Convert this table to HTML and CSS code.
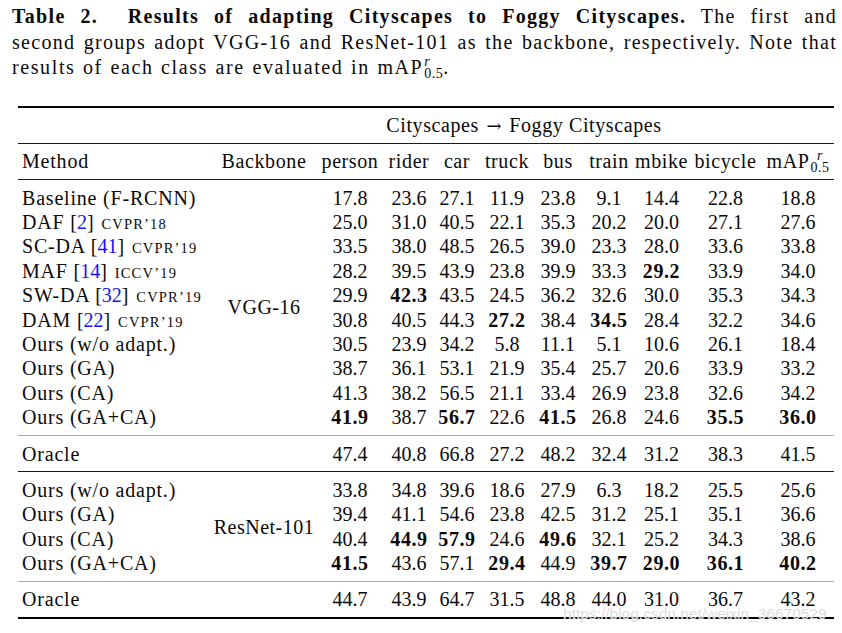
FILE: index.html
```html
<!DOCTYPE html>
<html>
<head>
<meta charset="utf-8">
<link rel="stylesheet" href="styles.css">
</head>
<body>
<div class="page">
  <div class="caption">
    <div class="cap-line just"><b>Table 2.&nbsp; Results of adapting Cityscapes to Foggy Cityscapes.</b> The first and</div>
    <div class="cap-line just">second groups adopt VGG-16 and ResNet-101 as the backbone, respectively. Note that</div>
    <div class="cap-line plain">results of each class are evaluated in mAP<span class="ss"><span class="ss-sup">r</span><span class="ss-sub">0.5</span></span>.</div>
  </div>

  <div class="results">
    <div class="rule heavy"></div>

    <div class="cell head"></div>
    <div class="cell head span-all label">Cityscapes <span class="arrow">→</span> Foggy Cityscapes</div>
    <div class="rule"></div>

    <div class="cell head method">Method</div>
    <div class="cell head label">Backbone</div>
    <div class="cell head label">person</div>
    <div class="cell head label">rider</div>
    <div class="cell head label">car</div>
    <div class="cell head label">truck</div>
    <div class="cell head label">bus</div>
    <div class="cell head label">train</div>
    <div class="cell head label">mbike</div>
    <div class="cell head label">bicycle</div>
    <div class="cell head label">mAP<span class="ss"><span class="ss-sup">r</span><span class="ss-sub">0.5</span></span></div>
    <div class="rule"></div>

    <div class="pad"></div>
    <div class="cell method">Baseline (F-RCNN)</div><div class="cell bb span10">VGG-16</div><div class="cell">17.8</div><div class="cell">23.6</div><div class="cell">27.1</div><div class="cell">11.9</div><div class="cell">23.8</div><div class="cell">9.1</div><div class="cell">14.4</div><div class="cell">22.8</div><div class="cell">18.8</div>
    <div class="cell method">DAF <span class="cite">[<span class="ref">2</span>]</span> <span class="venue">CVPR’18</span></div><div class="cell">25.0</div><div class="cell">31.0</div><div class="cell">40.5</div><div class="cell">22.1</div><div class="cell">35.3</div><div class="cell">20.2</div><div class="cell">20.0</div><div class="cell">27.1</div><div class="cell">27.6</div>
    <div class="cell method">SC-DA <span class="cite">[<span class="ref">41</span>]</span> <span class="venue">CVPR’19</span></div><div class="cell">33.5</div><div class="cell">38.0</div><div class="cell">48.5</div><div class="cell">26.5</div><div class="cell">39.0</div><div class="cell">23.3</div><div class="cell">28.0</div><div class="cell">33.6</div><div class="cell">33.8</div>
    <div class="cell method">MAF <span class="cite">[<span class="ref">14</span>]</span> <span class="venue">ICCV’19</span></div><div class="cell">28.2</div><div class="cell">39.5</div><div class="cell">43.9</div><div class="cell">23.8</div><div class="cell">39.9</div><div class="cell">33.3</div><div class="cell best">29.2</div><div class="cell">33.9</div><div class="cell">34.0</div>
    <div class="cell method">SW-DA <span class="cite">[<span class="ref">32</span>]</span> <span class="venue">CVPR’19</span></div><div class="cell">29.9</div><div class="cell best">42.3</div><div class="cell">43.5</div><div class="cell">24.5</div><div class="cell">36.2</div><div class="cell">32.6</div><div class="cell">30.0</div><div class="cell">35.3</div><div class="cell">34.3</div>
    <div class="cell method">DAM <span class="cite">[<span class="ref">22</span>]</span> <span class="venue">CVPR’19</span></div><div class="cell">30.8</div><div class="cell">40.5</div><div class="cell">44.3</div><div class="cell best">27.2</div><div class="cell">38.4</div><div class="cell best">34.5</div><div class="cell">28.4</div><div class="cell">32.2</div><div class="cell">34.6</div>
    <div class="cell method">Ours (w/o adapt.)</div><div class="cell">30.5</div><div class="cell">23.9</div><div class="cell">34.2</div><div class="cell">5.8</div><div class="cell">11.1</div><div class="cell">5.1</div><div class="cell">10.6</div><div class="cell">26.1</div><div class="cell">18.4</div>
    <div class="cell method">Ours (GA)</div><div class="cell">38.7</div><div class="cell">36.1</div><div class="cell">53.1</div><div class="cell">21.9</div><div class="cell">35.4</div><div class="cell">25.7</div><div class="cell">20.6</div><div class="cell">33.9</div><div class="cell">33.2</div>
    <div class="cell method">Ours (CA)</div><div class="cell">41.3</div><div class="cell">38.2</div><div class="cell">56.5</div><div class="cell">21.1</div><div class="cell">33.4</div><div class="cell">26.9</div><div class="cell">23.8</div><div class="cell">32.6</div><div class="cell">34.2</div>
    <div class="cell method">Ours (GA+CA)</div><div class="cell best">41.9</div><div class="cell">38.7</div><div class="cell best">56.7</div><div class="cell">22.6</div><div class="cell best">41.5</div><div class="cell">26.8</div><div class="cell">24.6</div><div class="cell best">35.5</div><div class="cell best">36.0</div>
    <div class="pad"></div>
    <div class="rule light"></div>

    <div class="pad"></div>
    <div class="cell method">Oracle</div><div class="cell"></div><div class="cell">47.4</div><div class="cell">40.8</div><div class="cell">66.8</div><div class="cell">27.2</div><div class="cell">48.2</div><div class="cell">32.4</div><div class="cell">31.2</div><div class="cell">38.3</div><div class="cell">41.5</div>
    <div class="pad"></div>
    <div class="rule"></div>

    <div class="pad"></div>
    <div class="cell method">Ours (w/o adapt.)</div><div class="cell bb span4">ResNet-101</div><div class="cell">33.8</div><div class="cell">34.8</div><div class="cell">39.6</div><div class="cell">18.6</div><div class="cell">27.9</div><div class="cell">6.3</div><div class="cell">18.2</div><div class="cell">25.5</div><div class="cell">25.6</div>
    <div class="cell method">Ours (GA)</div><div class="cell">39.4</div><div class="cell">41.1</div><div class="cell">54.6</div><div class="cell">23.8</div><div class="cell">42.5</div><div class="cell">31.2</div><div class="cell">25.1</div><div class="cell">35.1</div><div class="cell">36.6</div>
    <div class="cell method">Ours (CA)</div><div class="cell">40.4</div><div class="cell best">44.9</div><div class="cell best">57.9</div><div class="cell">24.6</div><div class="cell best">49.6</div><div class="cell">32.1</div><div class="cell">25.2</div><div class="cell">34.3</div><div class="cell">38.6</div>
    <div class="cell method">Ours (GA+CA)</div><div class="cell best">41.5</div><div class="cell">43.6</div><div class="cell">57.1</div><div class="cell best">29.4</div><div class="cell">44.9</div><div class="cell best">39.7</div><div class="cell best">29.0</div><div class="cell best">36.1</div><div class="cell best">40.2</div>
    <div class="pad"></div>
    <div class="rule light"></div>

    <div class="pad short"></div>
    <div class="cell method">Oracle</div><div class="cell"></div><div class="cell">44.7</div><div class="cell">43.9</div><div class="cell">64.7</div><div class="cell">31.5</div><div class="cell">48.8</div><div class="cell">44.0</div><div class="cell">31.0</div><div class="cell">36.7</div><div class="cell">43.2</div>
    <div class="pad"></div>
    <div class="rule heavy"></div>
  </div>

  <div class="watermark">https://blog.csdn.net/weixin_36670529</div>
</div>
</body>
</html>
```

FILE: styles.css
```css
html, body {
  margin: 0;
  padding: 0;
  background: #ffffff;
}

body {
  font-family: "Liberation Serif", "Times New Roman", serif;
  font-size: 20px;
  color: #0a0a0a;
}

.page {
  position: relative;
  width: 842px;
  height: 633px;
  overflow: hidden;
}

/* ---------- caption ---------- */
.caption {
  margin-left: 12px;
  width: 825px;
  padding-top: 4px;
  line-height: 25.5px;
  letter-spacing: 1.3px;
  word-spacing: 1px;
}

.cap-line.just {
  text-align: justify;
  text-align-last: justify;
}

.cap-line.plain {
  letter-spacing: 1.6px;
}

.ss {
  display: inline-flex;
  flex-direction: column;
  font-size: 14px;
  line-height: 12px;
  vertical-align: 8px;
  margin-left: 1px;
  letter-spacing: 0.5px;
}

.ss-sup {
  font-style: italic;
}

/* ---------- table (grid) ---------- */
.results {
  display: grid;
  grid-template-columns: 196px 100px 72px 46px 50px 50px 52px 50px 55px 73px 72px;
  width: 816px;
  margin-left: 18px;
  margin-top: 25.5px;
}

.rule {
  grid-column: 1 / -1;
  height: 1px;
  background: #1a1a1a;
}

.rule.heavy {
  height: 2px;
  background: #000;
}

.rule.light {
  background: #a8a8a8;
}

.pad {
  grid-column: 1 / -1;
  height: 5.5px;
}

.pad.short {
  height: 4.5px;
}

.cell {
  white-space: nowrap;
  text-align: center;
  line-height: 24.4px;
}

.cell.head {
  line-height: 35px;
}

.cell.span-all {
  grid-column: 2 / -1;
}

.cell.method {
  text-align: left;
  padding-left: 4px;
  letter-spacing: 0.8px;
}

.cell.label {
  letter-spacing: 0.6px;
}

.cell.bb {
  grid-column: 2;
  display: flex;
  align-items: center;
  justify-content: center;
  letter-spacing: 0.5px;
}

.cell.span10 {
  grid-row: span 10;
}

.cell.span4 {
  grid-row: span 4;
}

.arrow {
  font-family: "DejaVu Serif", serif;
  font-size: 18px;
  letter-spacing: 0;
  margin: 0 2px;
}

.best {
  font-weight: bold;
  letter-spacing: 0.6px;
}

.cite {
  letter-spacing: 0;
}

.cite .ref {
  color: #1414f0;
}

.venue {
  font-size: 14.5px;
  line-height: 10px;
  letter-spacing: 1.2px;
  margin-left: 2px;
}

/* ---------- watermark overlay ---------- */
.watermark {
  position: absolute;
  left: 563px;
  top: 607px;
  font-family: "Liberation Sans", Arial, sans-serif;
  font-size: 15.5px;
  line-height: 14px;
  color: rgba(212, 212, 212, 0.8);
  text-shadow: 0 0 1px rgba(255, 255, 255, 0.9);
  white-space: nowrap;
}
```
